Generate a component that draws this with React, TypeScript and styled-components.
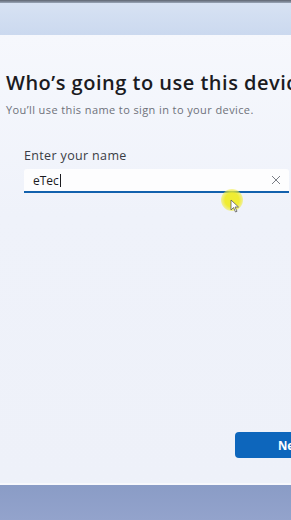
import React from "react";
import styled, { createGlobalStyle } from "styled-components";

const Global = createGlobalStyle`
  html, body { margin: 0; padding: 0; width: 291px; height: 520px; overflow: hidden; }
  body { font-family: "Open Sans", "Noto Sans", sans-serif; background: #8d9ec9; }
`;

const Screen = styled.div`
  width: 291px;
  height: 520px;
  display: flex;
  flex-direction: column;
  overflow: hidden;
  position: relative;
`;

const TopEdge = styled.div`
  height: 3px;
  background: linear-gradient(#5d6470, #9aa6b8);
`;

const TopBand = styled.div`
  height: 32px;
  background: linear-gradient(#d7e2f3, #cbd9ef);
`;

const Panel = styled.div`
  height: 450px;
  background: linear-gradient(180deg, #f6f8fd 0%, #eff2fa 40%, #eef1f9 100%);
  display: flex;
  flex-direction: column;
  overflow: hidden;
  border-bottom: 2px solid #f7f8fc;
  box-sizing: border-box;
`;

const Header = styled.div`
  padding: 36px 0 0 6px;
  display: flex;
  flex-direction: column;
  gap: 8px;
`;

const Title = styled.h1`
  margin: 0;
  font-size: 20px;
  font-weight: 600;
  line-height: 24px;
  color: #1b1b1f;
  white-space: nowrap;
  letter-spacing: 0.5px;
`;

const Subtitle = styled.p`
  margin: 0;
  font-size: 11px;
  line-height: 14px;
  color: #6e717a;
  white-space: nowrap;
  letter-spacing: 0.4px;
`;

const Field = styled.div`
  margin: 31px 2px 0 24px;
  display: flex;
  flex-direction: column;
  gap: 5px;
  position: relative;
`;

const Label = styled.label`
  font-size: 12.5px;
  line-height: 16px;
  color: #3a3d44;
  letter-spacing: 0.35px;
`;

const InputBox = styled.div`
  height: 24px;
  background: #fdfdfe;
  border-radius: 3px 3px 0 0;
  border-bottom: 2px solid #1261ad;
  box-sizing: border-box;
  display: flex;
  align-items: center;
  padding: 0 8px 0 9px;
`;

const Value = styled.span`
  flex: 1;
  font-size: 12px;
  color: #1b1b1f;
  display: flex;
  align-items: center;
`;

const Caret = styled.span`
  display: inline-block;
  width: 1px;
  height: 13px;
  background: #1b1b1f;
  margin-left: 1px;
`;

const ClearIcon = styled.svg`
  width: 10px;
  height: 10px;
`;

const Highlight = styled.div`
  position: absolute;
  left: 197px;
  top: 41px;
  width: 22px;
  height: 22px;
  border-radius: 50%;
  background: radial-gradient(circle, rgba(240, 236, 40, 0.95) 45%, rgba(240, 236, 60, 0.5) 70%, rgba(240, 236, 60, 0) 100%);
`;

const Pointer = styled.svg`
  position: absolute;
  left: 206px;
  top: 51px;
  width: 12px;
  height: 14px;
`;

const Footer = styled.div`
  margin-top: auto;
  margin-bottom: 25px;
  padding-left: 235px;
  display: flex;
`;

const NextButton = styled.button`
  flex: none;
  width: 90px;
  height: 26px;
  border: none;
  border-radius: 4px;
  background: #0d66bc;
  color: #fff;
  font-family: "Open Sans", "Noto Sans", sans-serif;
  font-size: 11.5px;
  font-weight: 700;
  text-align: left;
  padding-left: 43px;
`;

const BottomBand = styled.div`
  flex: 1;
  background: linear-gradient(180deg, #8a9cc6 0%, #93a3cc 100%);
`;

export default function App() {
  return (
    <Screen>
      <Global />
      <TopEdge />
      <TopBand />
      <Panel>
        <Header>
          <Title>Who’s going to use this device?</Title>
          <Subtitle>You’ll use this name to sign in to your device.</Subtitle>
        </Header>
        <Field>
          <Label>Enter your name</Label>
          <InputBox>
            <Value>
              eTec
              <Caret />
            </Value>
            <ClearIcon viewBox="0 0 10 10">
              <path d="M1 1 L9 9 M9 1 L1 9" stroke="#6b6f78" strokeWidth="0.9" fill="none" />
            </ClearIcon>
          </InputBox>
          <Highlight />
          <Pointer viewBox="0 0 12 14">
            <path d="M1 1 L1 11 L3.5 8.5 L5.5 13 L7 12.3 L5 8 L8.5 8 Z" fill="#fff" stroke="#5a5a5a" strokeWidth="0.8" />
          </Pointer>
        </Field>
        <Footer>
          <NextButton>Next</NextButton>
        </Footer>
      </Panel>
      <BottomBand />
    </Screen>
  );
}
